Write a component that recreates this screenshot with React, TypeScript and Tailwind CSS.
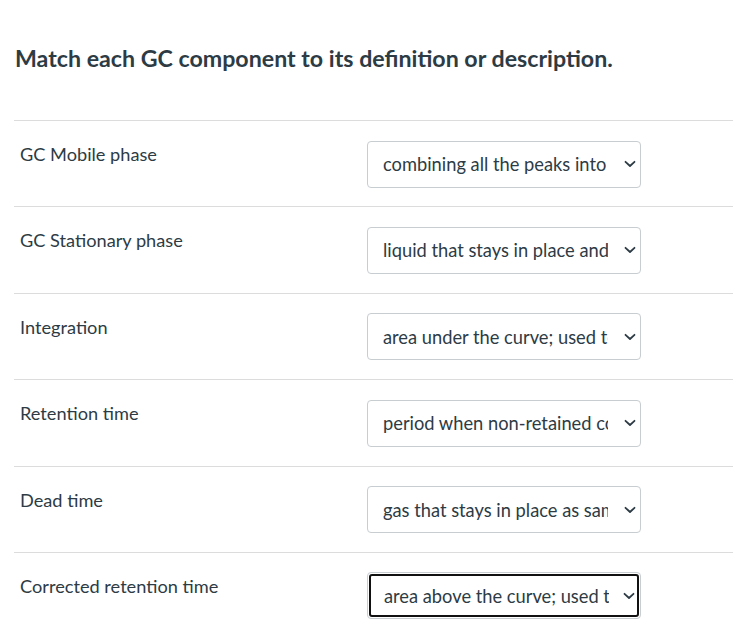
import React from "react";

const rows = [
  { label: "GC Mobile phase", value: "combining all the peaks into one" },
  { label: "GC Stationary phase", value: "liquid that stays in place and interacts" },
  { label: "Integration", value: "area under the curve; used to quantify" },
  { label: "Retention time", value: "period when non-retained compounds elute" },
  { label: "Dead time", value: "gas that stays in place as sample moves" },
  { label: "Corrected retention time", value: "area above the curve; used to quantify", focused: true },
];

function Chevron() {
  return (
    <svg width="12" height="12" viewBox="0 0 12 12" className="shrink-0 ml-auto">
      <path d="M1.5 3.8 L6 8 L10.5 3.8" fill="none" stroke="#2d3b45" strokeWidth="1.8" strokeLinecap="round" strokeLinejoin="round" />
    </svg>
  );
}

export default function App() {
  return (
    <div className="bg-white min-h-[642px] text-[#2d3b45] font-['Lato','Noto_Sans',sans-serif]">
      <div className="pl-[15px] pt-[40px] pb-[44px]">
        <h2 className="text-[23.2px] font-bold leading-[36px]">Match each GC component to its definition or description.</h2>
      </div>
      <div className="ml-[14px]">
        {rows.map((r) => (
          <div key={r.label} className="flex border-t border-[#dcdcdc] h-[86.4px]">
            <div className="w-[353px] pl-[6px] pt-[20px] text-[18.2px] leading-[27px] font-normal">{r.label}</div>
            <div className="pt-[19.5px]">
              <div
                className={
                  r.focused
                    ? "w-[274px] h-[47px] rounded-[4px] border border-[#c7cdd1] bg-white p-[1px]"
                    : "w-[274px] h-[47px] rounded-[4px] border border-[#c7cdd1] bg-white"
                }
              >
                <div
                  className={
                    r.focused
                      ? "h-full w-full rounded-[3px] border-2 border-[#111] flex items-center pl-[13px] pr-[2px]"
                      : "h-full w-full flex items-center pl-[15px] pr-[4px]"
                  }
                >
                  <span className="w-[225px] shrink-0 overflow-hidden whitespace-nowrap text-[18.3px] leading-[22px]">{r.value}</span>
                  <Chevron />
                </div>
              </div>
            </div>
          </div>
        ))}
      </div>
    </div>
  );
}
